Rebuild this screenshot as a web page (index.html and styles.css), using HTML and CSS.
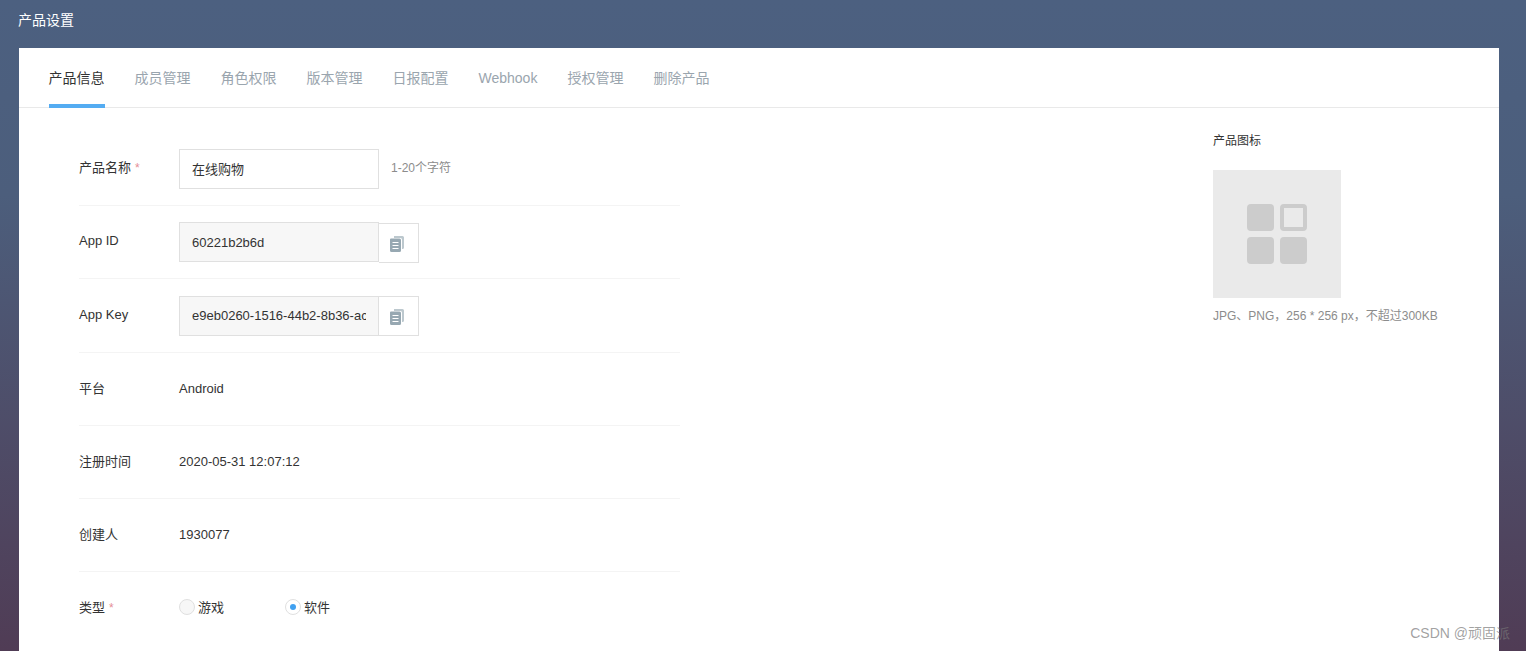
FILE: index.html
```html
<!DOCTYPE html>
<html lang="en">
<head>
    <meta charset="UTF-8">
    <meta name="viewport" content="width=device-width, initial-scale=1.0">
    <title>产品设置</title>
    <link rel="stylesheet" href="styles.css">
</head>
<body>

<div class="page-title">产品设置</div>

<div class="card">
    <div class="tabs">
        <a class="tab active">产品信息</a>
        <a class="tab">成员管理</a>
        <a class="tab">角色权限</a>
        <a class="tab">版本管理</a>
        <a class="tab">日报配置</a>
        <a class="tab">Webhook</a>
        <a class="tab">授权管理</a>
        <a class="tab">删除产品</a>
    </div>

    <div class="content">
        <div class="form">
            <div class="row first">
                <div class="label">产品名称<span class="star">*</span></div>
                <input class="input name-input" type="text" value="在线购物">
                <span class="tip">1-20个字符</span>
            </div>
            <div class="row">
                <div class="label">App ID</div>
                <input class="input readonly" type="text" value="60221b2b6d" readonly>
                <button class="copy-btn lower">
                    <svg width="14" height="16" viewBox="1 0 14 16"><path class="copy-back" d="M5 0h8.500a1.500 1.500 0 0 1 1.500 1.500v10a1.500 1.500 0 0 1-1.500 1.500H13V3.500A1.500 1.500 0 0 0 11.500 2H5z"/><path class="copy-front" fill-rule="evenodd" d="M2 2.500h8.500A1.500 1.500 0 0 1 12 4v10.500a1.500 1.500 0 0 1-1.500 1.500h-8A1.500 1.500 0 0 1 1 14.500V3.500a1 1 0 0 1 1-1zM3.500 6v1h6V6zm0 3v1h6V9zm0 3v1h6v-1z"/></svg>
                </button>
            </div>
            <div class="row">
                <div class="label">App Key</div>
                <input class="input readonly" type="text" value="e9eb0260-1516-44b2-8b36-acd1f04c7a52" readonly>
                <button class="copy-btn">
                    <svg width="14" height="16" viewBox="1 0 14 16"><path class="copy-back" d="M5 0h8.500a1.500 1.500 0 0 1 1.500 1.500v10a1.500 1.500 0 0 1-1.500 1.500H13V3.500A1.500 1.500 0 0 0 11.500 2H5z"/><path class="copy-front" fill-rule="evenodd" d="M2 2.500h8.500A1.500 1.500 0 0 1 12 4v10.500a1.500 1.500 0 0 1-1.500 1.500h-8A1.500 1.500 0 0 1 1 14.500V3.500a1 1 0 0 1 1-1zM3.500 6v1h6V6zm0 3v1h6V9zm0 3v1h6v-1z"/></svg>
                </button>
            </div>
            <div class="row">
                <div class="label">平台</div>
                <div class="value">Android</div>
            </div>
            <div class="row">
                <div class="label">注册时间</div>
                <div class="value">2020-05-31 12:07:12</div>
            </div>
            <div class="row">
                <div class="label">创建人</div>
                <div class="value">1930077</div>
            </div>
            <div class="row last">
                <div class="label">类型<span class="star">*</span></div>
                <label class="radio"><span class="dot"></span>游戏</label>
                <label class="radio"><span class="dot checked"></span>软件</label>
            </div>
        </div>

        <div class="icon-side">
            <div class="icon-title">产品图标</div>
            <div class="icon-box">
                <div class="icon-grid">
                    <span class="cell"></span>
                    <span class="cell hollow"></span>
                    <span class="cell"></span>
                    <span class="cell"></span>
                </div>
            </div>
            <div class="tip icon-tip">JPG、PNG，256 * 256 px，不超过300KB</div>
        </div>
    </div>
</div>

<div class="watermark">CSDN @顽固派</div>

</body>
</html>
```

FILE: styles.css
```css
* { box-sizing: border-box; }
html, body { height: 100%; }
body { margin: 0; height: 651px; overflow: hidden; display: flex; flex-direction: column; font-family: "Liberation Sans", "Noto Sans CJK SC", sans-serif; font-size: 12px; color: #333; background: linear-gradient(180deg, #4c6080 0%, #4c5e7c 30%, #503c55 100%); }
.page-title { height: 48px; padding: 12px 0 0 18px; line-height: 17px; font-size: 14px; color: #fff; flex-shrink: 0; }
.card { flex: 1; margin: 0 27px 0 19px; background-color: #fff; }
.tabs { display: flex; gap: 30px; height: 60px; padding-left: 29.5px; border-bottom: 1px solid #e9e9e9; }
.tab { height: 60px; line-height: 60px; font-size: 14px; color: #9aa5ae; }
.tab.active { color: #333; border-bottom: 4px solid #54acf2; }
.content { display: flex; justify-content: space-between; }
.form { width: 601px; margin: 25.1px 0 0 60px; }
.row { display: flex; align-items: center; height: 73.2px; border-bottom: 1px solid #f4f4f4; }
.row.last { border-bottom: none; }
.label { width: 100px; flex-shrink: 0; margin-top: -3px; font-size: 13px; color: #333; }
.row.first .label { margin-top: -5px; }
.star { margin-left: 4px; font-size: 12px; color: #e58e96; }
.input { width: 200px; height: 40px; padding: 0 12px; border: 1px solid #e0e0e0; outline: none; font-family: inherit; font-size: 13px; color: #333; background-color: #fff; }
.input.name-input { padding-bottom: 2px; }
.input.readonly { background-color: #f7f7f7; }
.tip { font-size: 12px; color: #8c8c8c; }
.row .tip { margin-left: 12px; margin-top: -5px; }
.copy-btn { display: flex; align-items: center; justify-content: center; width: 40px; height: 40px; padding: 2px 4px 0 0; border: 1px solid #e0e0e0; border-left: none; background-color: #fff; }
.copy-btn.lower { margin-top: 2px; }
.copy-back { fill: #bcc8ce; }
.copy-front { fill: #97a8b2; }
.value { margin-top: -1px; font-size: 13px; color: #333; }
.radio { display: flex; align-items: center; gap: 3px; width: 106px; margin-top: -3px; font-size: 13px; color: #333; }
.dot { display: flex; align-items: center; justify-content: center; width: 16px; height: 16px; margin-top: 2px; border: 1px solid #e0e0e0; border-radius: 50%; background-color: #f7f7f7; }
.dot.checked { background-color: #fff; }
.dot.checked::after { content: ""; width: 6px; height: 6px; border-radius: 50%; background-color: #3fa0f0; }
.row.last .label, .row.last .radio { margin-top: -5px; }
.icon-side { width: 286px; padding-top: 25px; }
.icon-title { line-height: 17px; font-size: 12px; color: #333; }
.icon-box { display: flex; align-items: center; justify-content: center; width: 128px; height: 128px; margin-top: 20px; background-color: #eaeaea; }
.icon-grid { display: grid; grid-template-columns: 27px 27px; grid-template-rows: 27px 27px; gap: 6px; }
.cell { border-radius: 4px; background-color: #ccc; }
.cell.hollow { border: 4px solid #ccc; background-color: transparent; }
.icon-tip { margin-top: 10px; line-height: 17px; white-space: nowrap; }
.watermark { position: absolute; right: 16px; bottom: 9px; font-size: 14px; color: rgba(120, 120, 120, 0.7); }
```
